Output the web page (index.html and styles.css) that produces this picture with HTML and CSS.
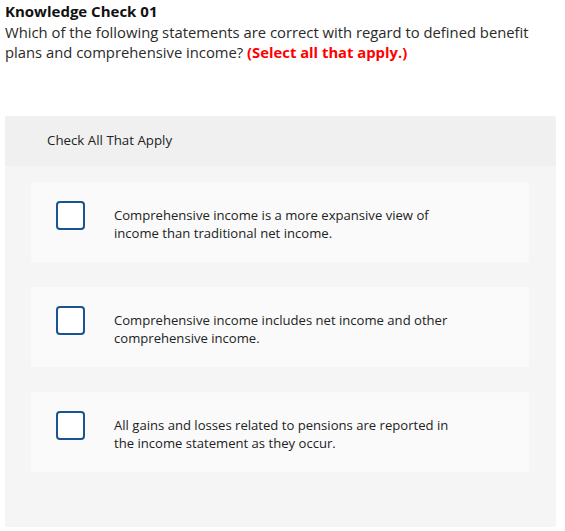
FILE: index.html
```html
<!DOCTYPE html>
<html lang="en">
<head>
<meta charset="utf-8">
<title>Knowledge Check 01</title>
<link rel="stylesheet" href="styles.css">
</head>
<body>
<div class="question">
  <h1 class="title">Knowledge Check 01</h1>
  <p class="prompt">Which of the following statements are correct with regard to defined benefit plans and comprehensive income? <strong class="hint">(Select all that apply.)</strong></p>
</div>
<section class="panel">
  <div class="panel-header">Check All That Apply</div>
  <div class="panel-body">
    <label class="option">
      <span class="box"></span>
      <span class="option-text">Comprehensive income is a more expansive view of income than traditional net income.</span>
    </label>
    <label class="option">
      <span class="box"></span>
      <span class="option-text">Comprehensive income includes net income and other comprehensive income.</span>
    </label>
    <label class="option">
      <span class="box"></span>
      <span class="option-text">All gains and losses related to pensions are reported in the income statement as they occur.</span>
    </label>
  </div>
</section>
</body>
</html>
```
FILE: styles.css
```css
html, body {
  margin: 0;
  padding: 0;
  background: #ffffff;
}
body {
  font-family: "Open Sans", "Liberation Sans", sans-serif;
  font-weight: 500;
  color: #222222;
  width: 565px;
}
.question {
  padding: 1px 5px 0 5px;
}
.title {
  margin: 0;
  font-size: 15px;
  font-weight: 700;
  line-height: 21px;
  color: #111111;
}
.prompt {
  margin: 0;
  max-width: 540px;
  font-size: 14.8px;
  line-height: 20px;
  color: #2a2a2a;
}
.hint {
  color: #ff0000;
  font-weight: 700;
}
.panel {
  margin: 54px 9px 0 5px;
  background: #f5f5f5;
  border-radius: 3px;
  width: 551px;
}
.panel-header {
  background: #f0f0f0;
  height: 50px;
  box-sizing: border-box;
  padding: 16px 0 0 42px;
  font-size: 13.3px;
  line-height: 17px;
  color: #222222;
  border-radius: 3px 3px 0 0;
}
.panel-body {
  padding: 16px 27px 55px 26px;
  display: flex;
  flex-direction: column;
  gap: 25px;
}
.option {
  display: flex;
  align-items: flex-start;
  height: 80px;
  box-sizing: border-box;
  padding: 19px 20px 0 25px;
  background: #fafafa;
  border-radius: 3px;
}
.box {
  flex: none;
  width: 29px;
  height: 29px;
  box-sizing: border-box;
  border: 2.5px solid #1a5394;
  border-radius: 4px;
  background: #ffffff;
}
.option-text {
  margin: 5px 0 0 29px;
  width: 348px;
  font-size: 13.1px;
  line-height: 18px;
  color: #222222;
}
```
